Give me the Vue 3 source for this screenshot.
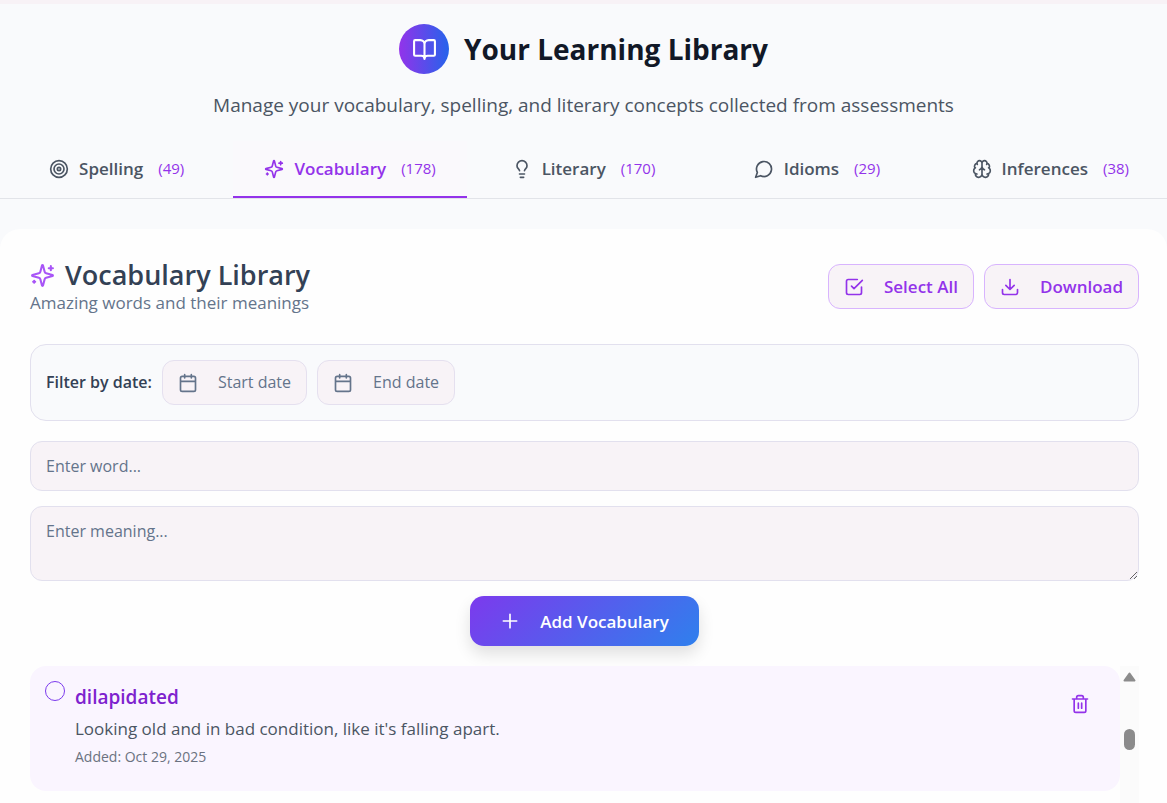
<template>
  <div class="library">
    <header class="library-header">
      <div class="title-row">
        <span class="title-badge">
          <svg class="icon icon-lg" viewBox="0 0 24 24"><path :d="icons.book" /></svg>
        </span>
        <h1>Your Learning Library</h1>
      </div>
      <p class="subtitle">Manage your vocabulary, spelling, and literary concepts collected from assessments</p>
    </header>

    <nav class="tabs">
      <button
        v-for="tab in tabs"
        :key="tab.id"
        type="button"
        class="tab"
        :class="{ active: tab.id === activeTab }"
        @click="activeTab = tab.id"
      >
        <svg class="icon" viewBox="0 0 24 24"><path :d="icons[tab.icon]" /></svg>
        <span class="tab-label">{{ tab.label }}</span>
        <span class="tab-count">({{ tab.count }})</span>
      </button>
    </nav>

    <main class="panel">
      <div class="panel-header">
        <div>
          <h2>
            <svg class="icon icon-lg" viewBox="0 0 24 24"><path :d="icons.sparkles" /></svg>
            Vocabulary Library
          </h2>
          <p class="panel-subtitle">Amazing words and their meanings</p>
        </div>
        <div class="actions">
          <button type="button" class="btn btn-outline" @click="selectAll">
            <svg class="icon" viewBox="0 0 24 24"><path :d="icons.check" /></svg>
            Select All
          </button>
          <button type="button" class="btn btn-outline">
            <svg class="icon" viewBox="0 0 24 24"><path :d="icons.download" /></svg>
            Download
          </button>
        </div>
      </div>

      <div class="filter">
        <span class="filter-label">Filter by date:</span>
        <button type="button" class="btn btn-date">
          <svg class="icon" viewBox="0 0 24 24"><path :d="icons.calendar" /></svg>
          Start date
        </button>
        <button type="button" class="btn btn-date">
          <svg class="icon" viewBox="0 0 24 24"><path :d="icons.calendar" /></svg>
          End date
        </button>
      </div>

      <form class="add-form" @submit.prevent="addWord">
        <input v-model="word" class="field" type="text" placeholder="Enter word..." aria-label="Word" />
        <textarea v-model="meaning" class="field field-area" placeholder="Enter meaning..." aria-label="Meaning"></textarea>
        <button type="submit" class="btn btn-add">
          <svg class="icon" viewBox="0 0 24 24"><path :d="icons.plus" /></svg>
          Add Vocabulary
        </button>
      </form>

      <div class="list-wrap">
        <ul class="list">
          <li v-for="item in items" :key="item.word" class="card">
            <input v-model="item.selected" class="card-check" type="checkbox" :aria-label="'Select ' + item.word" />
            <div class="card-body">
              <h3>{{ item.word }}</h3>
              <p class="card-meaning">{{ item.meaning }}</p>
              <p class="card-date">Added: {{ item.added }}</p>
            </div>
            <button type="button" class="card-delete" aria-label="Delete" @click="removeWord(item)">
              <svg class="icon" viewBox="0 0 24 24"><path :d="icons.trash" /></svg>
            </button>
          </li>
        </ul>
        <div class="scrollbar">
          <svg class="scroll-arrow" viewBox="0 0 13 10"><path d="M6.500 1.500 11.500 8.500H1.500z" /></svg>
          <span class="scroll-thumb"></span>
        </div>
      </div>
    </main>
  </div>
</template>

<script setup>
import { ref } from 'vue'

const icons = {
  book: 'M12 7v14M3 18a1 1 0 0 1-1-1V4a1 1 0 0 1 1-1h5a4 4 0 0 1 4 4 4 4 0 0 1 4-4h5a1 1 0 0 1 1 1v13a1 1 0 0 1-1 1h-6a3 3 0 0 0-3 3 3 3 0 0 0-3-3z',
  target: 'M2 12a10 10 0 1 0 20 0a10 10 0 1 0-20 0M6 12a6 6 0 1 0 12 0a6 6 0 1 0-12 0M10 12a2 2 0 1 0 4 0a2 2 0 1 0-4 0',
  sparkles: 'M9.937 15.5A2 2 0 0 0 8.5 14.063l-6.135-1.582a.5.5 0 0 1 0-.962L8.5 9.936A2 2 0 0 0 9.937 8.5l1.582-6.135a.5.5 0 0 1 .963 0L14.063 8.5A2 2 0 0 0 15.5 9.937l6.135 1.581a.5.5 0 0 1 0 .964L15.5 14.063a2 2 0 0 0-1.437 1.437l-1.582 6.135a.5.5 0 0 1-.963 0zM20 3v4M22 5h-4M4 17v2M5 18H3',
  bulb: 'M15 14c.2-1 .7-1.700 1.500-2.500 1-.9 1.500-2.200 1.500-3.500A6 6 0 0 0 6 8c0 1 .2 2.200 1.500 3.500.7.7 1.300 1.500 1.500 2.500M9 18h6M10 22h4',
  message: 'M7.900 20A9 9 0 1 0 4 16.100L2 22Z',
  brain: 'M12 5a3 3 0 1 0-5.997.125 4 4 0 0 0-2.526 5.770 4 4 0 0 0 .556 6.588A4 4 0 1 0 12 18ZM12 5a3 3 0 1 1 5.997.125 4 4 0 0 1 2.526 5.770 4 4 0 0 1-.556 6.588A4 4 0 1 1 12 18ZM15 13a4.500 4.500 0 0 1-3-4 4.500 4.500 0 0 1-3 4M17.599 6.500a3 3 0 0 0 .399-1.375M6.003 5.125A3 3 0 0 0 6.401 6.500M3.477 10.896a4 4 0 0 1 .585-.396M19.938 10.500a4 4 0 0 1 .585.396M6 18a4 4 0 0 1-1.967-.516M19.967 17.484A4 4 0 0 1 18 18',
  check: 'M9 11l3 3L22 4M21 12v7a2 2 0 0 1-2 2H5a2 2 0 0 1-2-2V5a2 2 0 0 1 2-2h11',
  download: 'M21 15v4a2 2 0 0 1-2 2H5a2 2 0 0 1-2-2v-4M7 10l5 5 5-5M12 15V3',
  calendar: 'M8 2v4M16 2v4M5 4h14a2 2 0 0 1 2 2v14a2 2 0 0 1-2 2H5a2 2 0 0 1-2-2V6a2 2 0 0 1 2-2zM3 10h18',
  plus: 'M4 12h16M12 4v16',
  trash: 'M3 6h18M19 6v14c0 1-1 2-2 2H7c-1 0-2-1-2-2V6M8 6V4c0-1 1-2 2-2h4c1 0 2 1 2 2v2M10 11v6M14 11v6'
}

const tabs = [
  { id: 'spelling', label: 'Spelling', count: 49, icon: 'target' },
  { id: 'vocabulary', label: 'Vocabulary', count: 178, icon: 'sparkles' },
  { id: 'literary', label: 'Literary', count: 170, icon: 'bulb' },
  { id: 'idioms', label: 'Idioms', count: 29, icon: 'message' },
  { id: 'inferences', label: 'Inferences', count: 38, icon: 'brain' }
]

const activeTab = ref('vocabulary')
const word = ref('')
const meaning = ref('')

const items = ref([
  {
    word: 'dilapidated',
    meaning: "Looking old and in bad condition, like it's falling apart.",
    added: 'Oct 29, 2025',
    selected: false
  }
])

const selectAll = () => {
  items.value.forEach((item) => {
    item.selected = true
  })
}

const addWord = () => {
  if (!word.value) return
  const added = new Date().toLocaleDateString('en-US', { month: 'short', day: 'numeric', year: 'numeric' })
  items.value.unshift({ word: word.value, meaning: meaning.value, added, selected: false })
  word.value = ''
  meaning.value = ''
}

const removeWord = (item) => {
  items.value = items.value.filter((other) => other !== item)
}
</script>

<style>
body {
  background: #f8fafc;
}
</style>

<style scoped>
* {
  box-sizing: border-box;
}

.library {
  display: flex;
  flex-direction: column;
  height: 100vh;
  overflow: hidden;
  border-top: 4px solid #f8f2f6;
  background: #f9fafc;
  color: #4b5563;
  font-family: 'Segoe UI', 'Open Sans', 'Noto Sans', sans-serif;
  font-size: 17px;
  line-height: 25px;
}

h1,
h2,
h3,
p,
ul {
  margin: 0;
  padding: 0;
}

button,
input,
textarea {
  font: inherit;
  margin: 0;
}

button {
  cursor: pointer;
}

.icon {
  flex: none;
  width: 20px;
  height: 20px;
  fill: none;
  stroke: currentColor;
  stroke-width: 2;
  stroke-linecap: round;
  stroke-linejoin: round;
}

.icon-lg {
  width: 25px;
  height: 25px;
}

.library-header {
  padding: 20px 20px 0;
  text-align: center;
}

.title-row {
  display: flex;
  align-items: center;
  justify-content: center;
  gap: 15px;
}

.title-badge {
  display: flex;
  align-items: center;
  justify-content: center;
  width: 50px;
  height: 50px;
  border-radius: 50%;
  background: linear-gradient(90deg, #9333ea, #2563eb);
  color: #fff;
}

h1 {
  color: #111827;
  font-size: 28px;
  font-weight: 700;
  line-height: 50px;
}

.subtitle {
  margin-top: 16px;
  font-size: 19px;
  line-height: 30px;
}

.tabs {
  display: grid;
  grid-template-columns: repeat(5, 1fr);
  margin-top: 21px;
  border-bottom: 1px solid #e2e4e9;
}

.tab {
  display: flex;
  align-items: center;
  justify-content: center;
  height: 57px;
  padding: 0;
  border: 0;
  border-bottom: 2px solid transparent;
  background: none;
  color: #4b5563;
  font-weight: 600;
}

.tab.active {
  border-bottom-color: #9333ea;
  background: #faf9fc;
  color: #9333ea;
}

.tab-label {
  margin-left: 10px;
}

.tab-count {
  margin-left: 15px;
  color: #9333ea;
  font-size: 15px;
  font-weight: 500;
}

.panel {
  display: flex;
  flex: 1;
  flex-direction: column;
  min-height: 0;
  margin-top: 30px;
  padding: 30px 28px 0 30px;
  border-radius: 20px 20px 0 0;
  background: #fefefe;
}

.panel-header {
  display: flex;
  align-items: center;
  justify-content: space-between;
}

h2 {
  display: flex;
  align-items: center;
  gap: 10px;
  color: #334155;
  font-size: 27px;
  font-weight: 600;
  line-height: 32px;
}

h2 .icon {
  color: #a855f7;
}

.panel-subtitle {
  color: #64748b;
  line-height: 23px;
}

.actions {
  display: flex;
  gap: 10px;
}

.btn {
  display: flex;
  align-items: center;
  gap: 20px;
  height: 45px;
  padding: 0 15px;
  border: 1px solid #e5e0ef;
  border-radius: 12px;
  background: #f8f3f7;
}

.btn-outline {
  border-color: #d8b4fe;
  color: #9333ea;
  font-weight: 600;
}

.filter {
  display: flex;
  align-items: center;
  gap: 10px;
  margin-top: 30px;
  padding: 15px;
  border: 1px solid #e2e0ee;
  border-radius: 16px;
  background: #f9fafc;
  font-size: 16px;
}

.filter-label {
  color: #334155;
  font-weight: 600;
}

.btn-date {
  color: #64748b;
}

.add-form {
  display: flex;
  flex-direction: column;
  gap: 15px;
  margin-top: 20px;
}

.field {
  width: 100%;
  height: 50px;
  padding: 12px 15px;
  border: 1px solid #e2e0ee;
  border-radius: 12px;
  outline: none;
  background: #f8f3f7;
  color: #334155;
  font-size: 16px;
}

.field::placeholder {
  color: #64748b;
  opacity: 1;
}

.field-area {
  display: block;
  height: 75px;
  resize: vertical;
}

.btn-add {
  align-self: center;
  height: 50px;
  padding: 0 30px;
  border: 0;
  border-radius: 14px;
  background: linear-gradient(135deg, #7c3aed, #2f80ed);
  box-shadow: 0 8px 16px rgba(0, 0, 0, 0.12);
  color: #fff;
  font-weight: 600;
}

.list-wrap {
  display: flex;
  flex: 1;
  min-height: 0;
  margin-top: 20px;
}

.list {
  flex: 1;
  list-style: none;
}

.card {
  display: flex;
  align-items: flex-start;
  gap: 10px;
  min-height: 125px;
  margin-bottom: 15px;
  padding: 15px;
  border-radius: 16px;
  background: #faf5ff;
}

.card-check {
  flex: none;
  width: 20px;
  height: 20px;
  margin: 0;
  border: 1px solid #7c3aed;
  border-radius: 50%;
  appearance: none;
  cursor: pointer;
}

.card-check:checked {
  background: #7c3aed;
}

.card-body {
  flex: 1;
}

h3 {
  color: #7e22ce;
  font-size: 19px;
  font-weight: 600;
  line-height: 32px;
}

.card-meaning {
  line-height: 32px;
}

.card-date {
  color: #6b7280;
  font-size: 14px;
  line-height: 23px;
}

.card-delete {
  display: flex;
  align-items: center;
  justify-content: center;
  width: 50px;
  height: 45px;
  padding: 0;
  border: 0;
  background: none;
  color: #9333ea;
}

.scrollbar {
  display: flex;
  flex-direction: column;
  align-items: center;
  width: 19px;
  padding-top: 6px;
  background: #fbfbfb;
}

.scroll-arrow {
  width: 13px;
  height: 10px;
  fill: #8b8b8b;
  stroke: #8b8b8b;
  stroke-width: 2;
  stroke-linejoin: round;
}

.scroll-thumb {
  width: 11px;
  height: 21px;
  margin-top: 47px;
  border-radius: 6px;
  background: #8b8b8b;
}
</style>
